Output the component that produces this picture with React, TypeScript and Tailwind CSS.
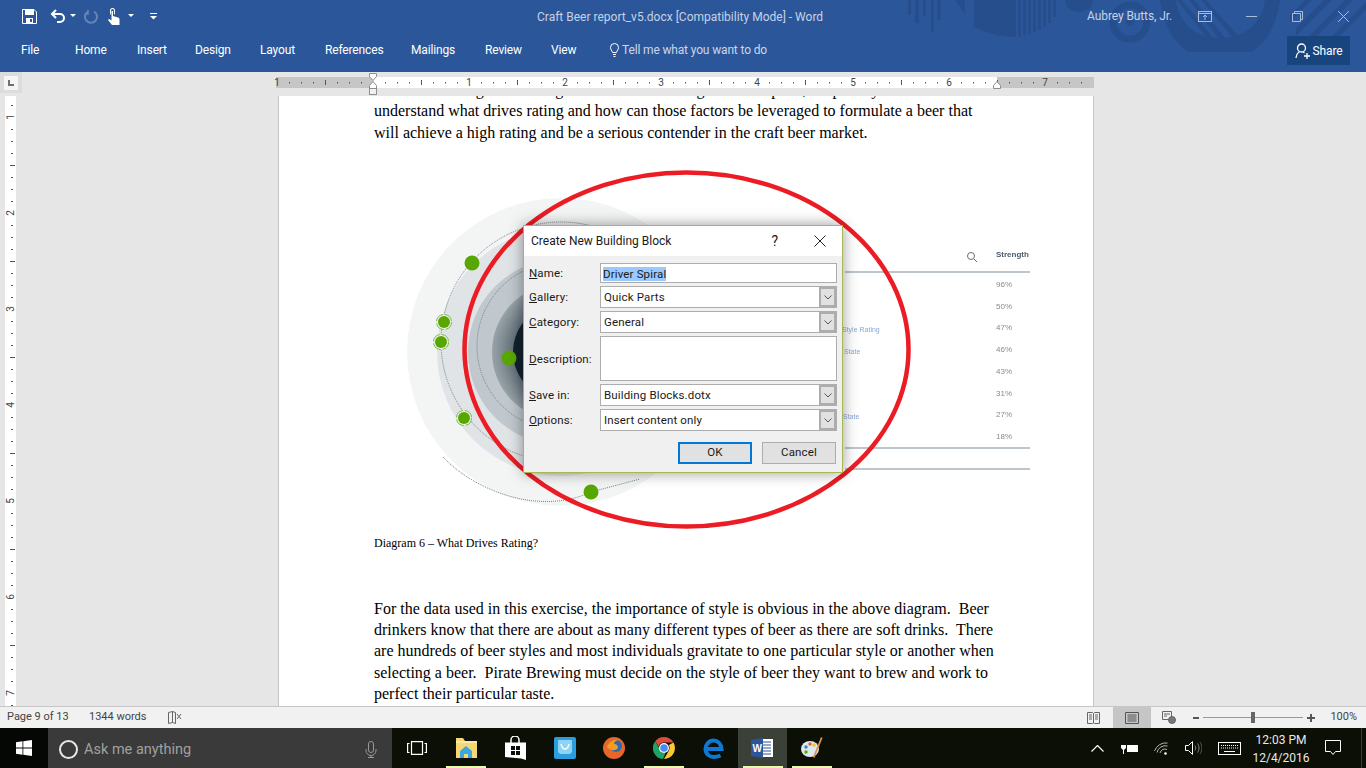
import type { ReactNode } from "react";

const UI = "font-['Roboto','Liberation_Sans',sans-serif]";

const tabs = [
  { label: "File", w: "w-[54px]" },
  { label: "Home", w: "w-[62px]" },
  { label: "Insert", w: "w-[58px]" },
  { label: "Design", w: "w-[65px]" },
  { label: "Layout", w: "w-[65px]" },
  { label: "References", w: "w-[86px]" },
  { label: "Mailings", w: "w-[74px]" },
  { label: "Review", w: "w-[66px]" },
  { label: "View", w: "w-[59px]" },
];

function TitleArt() {
  // the faint pattern of the Office theme, behind the title bar
  return (
    <svg className="absolute left-0 top-0 h-[72px] w-[1366px]" viewBox="0 0 1366 72" fill="#264e8c">
      <rect x="908" y="0" width="3" height="15" />
      <rect x="915" y="0" width="4" height="23" />
      <rect x="923" y="0" width="3" height="16" />
      <rect x="931" y="0" width="3" height="32" />
      <rect x="937" y="0" width="4" height="20" />
      <path d="M955 0h10v14z" />
      <path d="M974 0h42v37q-22 0-42-10z" />
      <path d="M1018 0h3v37h-3zM1023 0h3v35h-3zM1028 0h3v34h-3zM1033 0h3v32h-3zM1038 0h3v30h-3zM1043 0h3v27h-3zM1048 0h3v23h-3zM1053 0h3v17h-3z" />
      <path d="M1065 0h28a14 12 0 0 1-28 0z" />
      <circle cx="1130" cy="22" r="17" fill="none" stroke="#264e8c" strokeWidth="7" />
      <circle cx="1130" cy="22" r="4" />
      <path d="M1160 0h16c3 22 18 38 44 38s42-16 45-38h15c-3 24-13 42-28 52h-64c-15-10-25-28-28-52z" />
      <path d="M1177 0h5l38 46-6 1zM1189 0h5l37 45-6 2zM1201 0h5l36 40-5 3z" />
      <path d="M1290 15l15-15h7l-22 22zM1296 28l28-28h8l-36 36zM1310 35l35-35h8l-43 43zM1322 46l46-46v8l-46 46z" opacity="0.9" />
    </svg>
  );
}

function QuickAccess() {
  return (
    <div className="flex items-center">
      <svg className="ml-[22px]" width="15" height="15" viewBox="0 0 15 15">
        <path d="M.5.5h11.5l2.5 2.5v11.500H.5z" fill="none" stroke="#fff" />
        <rect x="3" y="1" width="9" height="5" fill="#fff" />
        <rect x="4" y="9" width="7" height="5" fill="#fff" />
        <rect x="8" y="10" width="2" height="3" fill="#2b579a" />
      </svg>
      <svg className="ml-[13px]" width="16" height="14" viewBox="0 0 16 14" fill="none" stroke="#fff" strokeWidth="2">
        <path d="M6 1L2 5l4 4" />
        <path d="M2 5h8a4 4 0 0 1 0 8H7" />
      </svg>
      <svg className="ml-[4px]" width="6" height="4" viewBox="0 0 6 4" fill="#fff"><path d="M0 0h6L3 3z" /></svg>
      <svg className="ml-[8px]" width="14" height="15" viewBox="0 0 14 15" fill="none" stroke="#6485b8" strokeWidth="2">
        <path d="M4 2.500a6 6 0 1 0 6 0" />
        <path d="M4 1v4H1" strokeWidth="1.500" />
      </svg>
      <svg className="ml-[9px]" width="13" height="17" viewBox="0 0 13 17" fill="#fff">
        <path d="M3 2.500a2.500 2.500 0 0 1 5 0V5a2.500 2.500 0 0 1-1 1.900V2.500a1.500 1.500 0 0 0-3 0v4.400A2.500 2.500 0 0 1 3 5z" />
        <path d="M4.500 3h1.500v5l5 1.500c1 .3 1.500 1 1.500 2V17H5l-4-5 1-1 2.500 1.500z" />
      </svg>
      <svg className="ml-[8px]" width="6" height="4" viewBox="0 0 6 4" fill="#fff"><path d="M0 0h6L3 3z" /></svg>
      <svg className="ml-[16px]" width="7" height="7" viewBox="0 0 7 7" fill="#fff">
        <rect y="0" width="7" height="1" />
        <path d="M0 3h7L3.500 6.500z" />
      </svg>
    </div>
  );
}

function WindowButtons() {
  return (
    <div className="flex items-center text-[#a9bcd9]">
      <div className="flex w-[46px] justify-center">
        <svg width="14" height="11" viewBox="0 0 14 11" fill="none" stroke="currentColor">
          <rect x=".5" y=".5" width="13" height="10" />
          <path d="M.5 2.500h13M7 9V4.500M5 6l2-2 2 2" />
        </svg>
      </div>
      <div className="flex w-[46px] justify-center"><div className="h-px w-[11px] bg-[#a9bcd9]" /></div>
      <div className="flex w-[46px] justify-center">
        <svg width="11" height="11" viewBox="0 0 11 11" fill="none" stroke="currentColor">
          <path d="M.5 2.500h8v8h-8zM2.500 2.500v-2h8v8h-2" />
        </svg>
      </div>
      <div className="flex w-[46px] justify-center">
        <svg width="11" height="11" viewBox="0 0 11 11" stroke="currentColor"><path d="M0 0l11 11M11 0L0 11" /></svg>
      </div>
    </div>
  );
}

function Ribbon() {
  return (
    <header className={`relative h-[72px] shrink-0 bg-[#2b579a] ${UI}`}>
      <TitleArt />
      <div className="relative flex h-9 items-center pb-[4px]">
        <QuickAccess />
        <div className="absolute left-[537px] top-[8px] whitespace-nowrap text-[12px] text-[#c5d2e6]">
          Craft Beer report_v5.docx [Compatibility Mode] - Word
        </div>
        <div className="ml-auto flex items-center">
          <span className="mr-[10px] whitespace-nowrap text-[12px] tracking-[-0.1px] text-[#c5d2e6]">Aubrey Butts, Jr.</span>
          <WindowButtons />
        </div>
      </div>
      <div className="relative flex h-9 items-center pl-[21px] text-[12px] tracking-[-0.15px] text-white">
        {tabs.map((t) => (
          <div key={t.label} className={`mt-[-8px] ${t.w}`}>{t.label}</div>
        ))}
        <div className="mt-[-8px] flex items-center gap-[3px] text-[#c9d6ea]">
          <svg width="9" height="14" viewBox="0 0 9 14" fill="none" stroke="#fff">
            <path d="M2.500 9.500C2 7.500.5 6.500.5 4.500a4 4 0 0 1 8 0c0 2-1.500 3-2 5zM3 11.500h3M3.500 13.500h2" />
          </svg>
          <span>Tell me what you want to do</span>
        </div>
        <div className="mb-[7px] ml-auto mr-[16px] flex h-[29px] w-[63px] items-center justify-center gap-[3px] bg-[#19457f] text-[12px]">
          <svg width="15" height="16" viewBox="0 0 15 16" fill="none" stroke="#fff" strokeWidth="1.300">
            <circle cx="6.500" cy="5" r="4" />
            <path d="M1 15c.5-4 2.500-6 4-6.500M8 9l1.500 1M9 13h6M12 10v6" />
          </svg>
          <span>Share</span>
        </div>
      </div>
    </header>
  );
}

function HRuler() {
  const dots: number[] = [];
  for (let x = 277; x < 1093; x += 12) dots.push(x);
  return (
    <svg className="ml-[250px]" width="822" height="24" viewBox="272 72 822 24">
      <rect x="276" y="77" width="818" height="11" fill="#c6c6c6" />
      <rect x="373" y="77" width="624" height="11" fill="#fff" />
      {dots.map((x) => {
        const off = x - 277;
        if (off % 96 === 0) return null;
        return off % 48 === 0 ? (
          <rect key={x} x={x} y="80" width="1" height="5" fill="#555" />
        ) : (
          <rect key={x} x={x} y="82" width="1" height="1.500" fill="#555" />
        );
      })}
      {[
        [277, "1"], [469, "1"], [565, "2"], [661, "3"], [757, "4"], [853, "5"], [949, "6"], [1045, "7"],
      ].map(([x, s]) => (
        <text key={x as number} x={x as number} y="86" textAnchor="middle" fontSize="10" fill="#444" fontFamily="Roboto">{s}</text>
      ))}
      <path d="M369.500 73.500h7v3l-3.500 4-3.500-4zM369.500 88.500v-3l3.500-4 3.500 4v3z" fill="#fff" stroke="#8e8e8e" />
      <rect x="369.500" y="88.500" width="7" height="6" fill="#f1f1f1" stroke="#8e8e8e" />
      <path d="M993.500 88.500v-3l3.500-4 3.500 4v3z" fill="#fff" stroke="#8e8e8e" />
    </svg>
  );
}

function VRuler() {
  const ticks: number[] = [];
  for (let y = 105; y < 706; y += 12) ticks.push(y);
  return (
    <svg className="ml-[5px] shrink-0 bg-white" width="11" height="610" viewBox="0 96 11 610">
      {ticks.map((y) => {
        if ((y - 117) % 96 === 0) return null;
        return (y - 117) % 48 === 0 ? (
          <rect key={y} x="5" y={y} width="5" height="1" fill="#555" />
        ) : (
          <rect key={y} x="6" y={y} width="2" height="1" fill="#555" />
        );
      })}
      {[1, 2, 3, 4, 5, 6, 7].map((n) => (
        <text key={n} transform={`translate(9 ${21 + 96 * n}) rotate(-90)`} textAnchor="middle" fontSize="10" fill="#444" fontFamily="Roboto">{n}</text>
      ))}
    </svg>
  );
}

function Dot({ x, y, ring }: { x: number; y: number; ring?: boolean }) {
  return (
    <g>
      {ring && <circle cx={x} cy={y} r="7.500" fill="#eef1f1" stroke="#7fb83c" strokeWidth="1" strokeDasharray="10 2" />}
      <circle cx={x} cy={y} r={ring ? 6 : 7.500} fill="#58a600" />
    </g>
  );
}

function Diagram() {
  const pct = [
    [284, "96%"], [306, "50%"], [327, "47%"], [349, "46%"], [371, "43%"], [393, "31%"], [414, "27%"], [436, "18%"],
  ];
  return (
    <svg className="block" width="719" height="391" viewBox="374 142 719 391">
      <defs>
        <radialGradient id="mid" gradientUnits="userSpaceOnUse" cx="561" cy="351" r="69">
          <stop offset="0.7" stopColor="#66727a" />
          <stop offset="1" stopColor="#98a3a9" />
        </radialGradient>
      </defs>
      <circle cx="561" cy="351" r="154" fill="#f3f5f5" />
      <circle cx="561" cy="351" r="124" fill="#e1e4e7" />
      <circle cx="561" cy="351" r="93" fill="#c0c8cd" />
      <circle cx="561" cy="351" r="69" fill="url(#mid)" />
      <circle cx="561" cy="351" r="48" fill="#12222e" />
      <g fill="none" stroke="#74828d" strokeWidth="1" strokeDasharray="1 1">
        <circle cx="561" cy="341" r="120" />
        <circle cx="561" cy="345" r="84" />
        <circle cx="561" cy="352" r="54" />
        <path d="M443 456C475 490 540 515 591 491L640 478" />
      </g>
      <Dot x={472} y={262} />
      <Dot x={444} y={321} ring />
      <Dot x={441} y={341} ring />
      <Dot x={509} y={357} />
      <Dot x={464} y={417} ring />
      <Dot x={591} y={491} />
      <g className="blur-[0.3px]" fontFamily="Liberation Sans">
        <path d="M845 271h185M845 447h185M845 468h185" stroke="#a9b4bb" strokeWidth="1.500" />
        <circle cx="971" cy="255" r="3.500" fill="none" stroke="#5c6f7d" />
        <path d="M974 258l3 3" stroke="#5c6f7d" />
        <text x="996" y="256" fontSize="8" fontWeight="700" fill="#4c5c6a">Strength</text>
        {pct.map(([y, s]) => (
          <text key={s} x="996" y={(y as number) + 2} fontSize="8" fill="#8a8a8a">{s}</text>
        ))}
        <text x="842" y="331" fontSize="7" fill="#8aa8d8">Style Rating</text>
        <text x="844" y="353" fontSize="7" fill="#8aa8d8">State</text>
        <text x="843" y="418" fontSize="7" fill="#8aa8d8">State</text>
      </g>
    </svg>
  );
}

function Page() {
  return (
    <div className="ml-[262px] h-[610px] w-[816px] shrink-0 overflow-hidden border-l border-r border-[#c6c6c6] bg-white font-['Liberation_Serif',serif] text-[16px] leading-[21.3px] text-black">
      <div className="mt-[-17px] pl-[95px]">
        <p className="whitespace-pre">The task of design for these great beers is a thorough and complete, deep analysis to</p>
        <p className="whitespace-pre">understand what drives rating and how can those factors be leveraged to formulate a beer that</p>
        <p className="whitespace-pre">will achieve a high rating and be a serious contender in the craft beer market.</p>
      </div>
      <div className="pl-[95px]"><Diagram /></div>
      <p className="pl-[95px] text-[12px] leading-[18px]">Diagram 6 – What Drives Rating?</p>
      <div className="mt-[46px] pl-[95px]">
        <p className="whitespace-pre">For the data used in this exercise, the importance of style is obvious in the above diagram.  Beer</p>
        <p className="whitespace-pre">drinkers know that there are about as many different types of beer as there are soft drinks.  There</p>
        <p className="whitespace-pre">are hundreds of beer styles and most individuals gravitate to one particular style or another when</p>
        <p className="whitespace-pre">selecting a beer.  Pirate Brewing must decide on the style of beer they want to brew and work to</p>
        <p className="whitespace-pre">perfect their particular taste.</p>
      </div>
    </div>
  );
}

function Select({ value }: { value: string }) {
  return (
    <div className="flex h-[22px] items-center border border-[#adadad] bg-white pl-[3px]">
      <span className="flex-1 pt-[2px]">{value}</span>
      <div className="flex h-full w-[17px] items-center justify-center border-2 border-[#adadad] bg-[#e1e1e1]">
        <svg width="8" height="5" viewBox="0 0 8 5" fill="none" stroke="#555"><path d="M.5.500L4 4 7.500.500" /></svg>
      </div>
    </div>
  );
}

function Dialog() {
  return (
    <div className={`absolute left-[523px] top-[225px] w-[320px] border border-[#a6b84e] bg-[#f0f0f0] text-[11.5px] tracking-[0.15px] text-[#1a1a1a] shadow-[0_0_14px_rgba(0,0,0,0.4)] ${UI}`}>
      <div className="flex h-[30px] items-center bg-white pl-[7px] text-[12px] tracking-normal">
        <span className="flex-1">Create New Building Block</span>
        <span className="mr-[36px] text-[14px]">?</span>
        <svg className="mr-[16px]" width="12" height="12" viewBox="0 0 12 12" stroke="#222"><path d="M.5.500l11 11M11.500.500l-11 11" /></svg>
      </div>
      <div className="grid grid-cols-[71px_237px] items-center gap-y-[3px] pl-[5px] pt-[7px]">
        <label className="pt-[2px]"><u>N</u>ame:</label>
        <div className="flex h-[20px] items-center border border-[#adadad] bg-white pl-[2px] pt-[1px]">
          <span className="bg-[#99c9ff] leading-[14px]">Driver Spiral</span>
        </div>
        <label className="pt-[2px]"><u>G</u>allery:</label>
        <Select value="Quick Parts" />
        <label className="pt-[2px]"><u>C</u>ategory:</label>
        <Select value="General" />
        <label className="pt-[2px]"><u>D</u>escription:</label>
        <div className="h-[45px] border border-[#adadad] bg-white" />
        <label className="pt-[2px]"><u>S</u>ave in:</label>
        <Select value="Building Blocks.dotx" />
        <label className="pt-[2px]"><u>O</u>ptions:</label>
        <Select value="Insert content only" />
      </div>
      <div className="flex justify-end gap-[10px] pb-[8px] pr-[6px] pt-[11px]">
        <button className="h-[22px] w-[74px] border-2 border-[#0078d7] bg-[#e1e1e1]">OK</button>
        <button className="h-[22px] w-[74px] border border-[#adadad] bg-[#e1e1e1]">Cancel</button>
      </div>
    </div>
  );
}

function StatusBar() {
  return (
    <footer className={`flex h-[22px] shrink-0 items-center border-t border-[#c6c6c6] bg-[#f1f1f1] text-[11px] text-[#444] ${UI}`}>
      <span className="ml-[7px] w-[82px]">Page 9 of 13</span>
      <span className="w-[79px]">1344 words</span>
      <svg width="14" height="13" viewBox="0 0 14 13" fill="none" stroke="#666">
        <path d="M.5 1.500l4-1 3 1v11l-3-1-4 1zM4.500.500v11" />
        <path d="M9 3l4 5M13 3L9 8" />
      </svg>
      <div className="ml-auto flex h-full items-center">
        <svg width="13" height="12" viewBox="0 0 13 12" fill="none" stroke="#666">
          <path d="M.5.500h5l1 1 1-1h5v11h-5l-1-.5-1 .5h-5zM6.500 1.500V11M2 3h3M2 5h3M2 7h3M8 3h3M8 5h3M8 7h3" />
        </svg>
        <div className="ml-[13px] flex h-full w-[38px] items-center justify-center bg-[#c6c6c6]">
          <svg width="14" height="12" viewBox="0 0 14 12" fill="none" stroke="#555">
            <path d="M.5.500h13v11H.5zM2.500 3h9M2.500 5h9M2.500 7h9M2.500 9h9" />
          </svg>
        </div>
        <svg className="ml-[11px]" width="14" height="13" viewBox="0 0 14 13" fill="none" stroke="#666">
          <path d="M.5.500h9v8h-9zM2 3h6M2 5h3" />
          <circle cx="10" cy="9" r="3.500" fill="#777" />
        </svg>
        <div className="ml-[17px] h-[2px] w-[6px] bg-[#555]" />
        <div className="relative ml-[4px] h-px w-[100px] bg-[#999]">
          <div className="absolute left-[48px] top-[-5px] h-[11px] w-[4px] bg-[#666]" />
        </div>
        <svg className="ml-[4px]" width="8" height="8" viewBox="0 0 8 8" fill="#555"><path d="M3 0h2v3h3v2H5v3H3V5H0V3h3z" /></svg>
        <span className="ml-[15px] mr-[9px]">100%</span>
      </div>
    </footer>
  );
}

function TaskItem({ active, running, children }: { active?: boolean; running?: boolean; children: ReactNode }) {
  return (
    <div className={`relative flex h-full w-[49.4px] items-center justify-center ${active ? "bg-[#3b4138]" : ""}`}>
      {children}
      {running && <div className="absolute bottom-0 left-[5px] h-[2px] w-[40px] bg-[#edf7ae]" />}
    </div>
  );
}

function Taskbar() {
  return (
    <div className={`flex h-10 shrink-0 items-center bg-[#0b0f05] text-white ${UI}`}>
      <div className="flex h-full w-12 items-center justify-center bg-[#050705]">
        <svg width="16" height="16" viewBox="0 0 16 16" fill="#fff">
          <path d="M0 2.200l6.500-.9v6.300H0zM7.300 1.200L16 0v7.600H7.300zM0 8.400h6.500v6.300L0 13.800zM7.300 8.400H16V16l-8.700-1.200z" />
        </svg>
      </div>
      <div className="flex h-full w-[344px] items-center bg-[#3a3a3a] pt-[2px]">
        <div className="ml-[11px] h-[19px] w-[19px] rounded-full border-[2.5px] border-[#e6e6e6]" />
        <span className="ml-[6px] flex-1 pt-[2px] text-[14.5px] text-[#a0a0a0]">Ask me anything</span>
        <svg className="mr-[15px]" width="12" height="17" viewBox="0 0 12 17" fill="none" stroke="#999">
          <rect x="3.500" y=".5" width="5" height="11" rx="2.500" />
          <path d="M1 8v1.500a5 5 0 0 0 10 0V8M6 14.500v2M3 16.500h6" />
        </svg>
      </div>
      <TaskItem>
        <svg width="20" height="14" viewBox="0 0 20 14" fill="none" stroke="#fff" strokeWidth="1.200">
          <path d="M4.500.6h11v12.800h-11zM2.500 2.500H.6v9h1.900M17.500 2.500h1.900v9h-1.900" />
        </svg>
      </TaskItem>
      <TaskItem running>
        <svg width="22" height="20" viewBox="0 0 22 20">
          <path d="M1 0h7l2 3h12v17H1z" fill="#f7d774" />
          <path d="M1 3h21v2H1z" fill="#fbe9a8" />
          <path d="M5 13l6-5 6 5v7h-4v-4H9v4H5z" fill="#3aa7e0" />
        </svg>
      </TaskItem>
      <TaskItem>
        <svg width="21" height="24" viewBox="0 0 21 24">
          <path d="M6 7V4a4 4 0 0 1 8 0v3" fill="none" stroke="#fff" strokeWidth="1.500" />
          <path d="M0 6.500h21V24l-5-1.500L0 21z" fill="#fff" />
          <path d="M6 10h4v4H6zM11 10h4v4h-4zM6 15h4v4H6zM11 15h4v4h-4z" fill="#0b0f05" />
        </svg>
      </TaskItem>
      <TaskItem>
        <svg width="22" height="22" viewBox="0 0 22 22">
          <rect width="22" height="22" rx="2" fill="#2a9fe0" />
          <path d="M4 3h14v12l-2 2H6l-2-2z" fill="#8fd3f4" />
          <path d="M7 7c1 4 3 5 4 5s3-1 4-5" fill="none" stroke="#fff" strokeWidth="1.300" />
        </svg>
      </TaskItem>
      <TaskItem>
        <svg width="22" height="22" viewBox="0 0 22 22">
          <circle cx="11" cy="11" r="11" fill="#e8662a" />
          <circle cx="13" cy="9" r="6" fill="#2b6cb0" />
          <path d="M4 10c2-6 8-8 12-7-3 0-5 2-5 4 3 0 4 2 4 4-3 4-9 2-11-1z" fill="#f59b23" />
        </svg>
      </TaskItem>
      <TaskItem running>
        <svg width="22" height="22" viewBox="0 0 22 22">
          <path d="M11 0a11 11 0 0 1 9.500 5.500H11a5.500 5.500 0 0 0-5.300 4L2.200 4.300A11 11 0 0 1 11 0z" fill="#dd4b3e" />
          <path d="M20.500 5.500A11 11 0 0 1 11 22l4.800-8.300A5.500 5.500 0 0 0 15.800 8z" fill="#fcc934" />
          <path d="M2.200 4.300L7 12.500A5.500 5.500 0 0 0 12.500 16L10 22A11 11 0 0 1 2.200 4.300z" fill="#1da462" />
          <circle cx="11" cy="11" r="5" fill="#fff" />
          <circle cx="11" cy="11" r="3.800" fill="#4a8af4" />
        </svg>
      </TaskItem>
      <TaskItem>
        <svg width="21" height="21" viewBox="0 0 21 21" fill="none" stroke="#0f78d4" strokeWidth="4">
          <path d="M3 11h15.500C18 5.500 14.500 2.500 10.500 2.500 6 2.500 2.500 6.500 2.500 11c0 5 4 8 8 8 2.500 0 5-.5 7-1.500" />
        </svg>
      </TaskItem>
      <TaskItem active running>
        <svg width="22" height="20" viewBox="0 0 22 20">
          <path d="M8 1h14v18H8z" fill="#fff" />
          <path d="M12 4h8M12 7h8M12 10h8M12 13h8M12 16h8" stroke="#2b579a" />
          <path d="M0 2l12-2v20L0 18z" fill="#2b579a" />
          <text x="1.500" y="14" fontSize="10" fontWeight="700" fill="#fff" fontFamily="Liberation Sans">W</text>
        </svg>
      </TaskItem>
      <TaskItem running>
        <svg width="22" height="24" viewBox="0 0 22 24">
          <ellipse cx="9" cy="13" rx="9" ry="8" fill="#dfe9ee" />
          <circle cx="5" cy="11" r="1.700" fill="#3b82c4" />
          <circle cx="9" cy="8" r="1.700" fill="#e45c3a" />
          <circle cx="13" cy="9" r="1.700" fill="#f0c330" />
          <circle cx="5" cy="16" r="1.700" fill="#58a600" />
          <path d="M20 1l1.500 1-8 20-1.500-1z" fill="#d9924a" />
        </svg>
      </TaskItem>
      <div className="ml-auto flex h-full items-center">
        <div className="flex w-[34px] justify-center">
          <svg width="13" height="7" viewBox="0 0 13 7" fill="none" stroke="#fff" strokeWidth="1.200"><path d="M.5 6.500l6-6 6 6" /></svg>
        </div>
        <div className="flex w-[30px] justify-center">
          <svg width="17" height="12" viewBox="0 0 17 12" fill="#fff">
            <path d="M1 0v3M4 0v3M0 3h5v3L3 8v4H2V8L0 6z" />
            <rect x="6" y="3" width="11" height="7" />
          </svg>
        </div>
        <div className="flex w-[34px] justify-center">
          <svg width="14" height="13" viewBox="0 0 14 13" fill="none" stroke="#b5b5b5">
            <path d="M.5 9a12 12 0 0 1 13-8M3 10.500a8.500 8.500 0 0 1 10.500-6.500M6 11a5 5 0 0 1 7-3.500" />
            <circle cx="11.500" cy="11.500" r="1.300" fill="#fff" stroke="none" />
          </svg>
        </div>
        <div className="flex w-[30px] justify-center">
          <svg width="17" height="14" viewBox="0 0 17 14" fill="none" stroke="#fff">
            <path d="M.5 4.500h3l4-4v13l-4-4h-3z" />
            <path d="M10 4.500c1 1.500 1 3.500 0 5M12.500 2.500c2 3 2 6 0 9" stroke="#888" />
            <path d="M15 1c2.500 4 2.500 8 0 12" stroke="#555" />
          </svg>
        </div>
        <div className="flex w-[42px] justify-center">
          <svg width="23" height="13" viewBox="0 0 23 13" fill="none" stroke="#fff">
            <rect x=".5" y=".5" width="22" height="12" />
            <path d="M3 3.500h17M3 6h17" strokeDasharray="1 1" />
            <path d="M6 9.500h11" />
          </svg>
        </div>
        <div className="flex w-[62px] flex-col items-center pt-[2px] text-[12px] leading-[18px] text-[#e8e8e8]">
          <span>12:03 PM</span>
          <span>12/4/2016</span>
        </div>
        <div className="flex w-[42px] justify-center">
          <svg width="16" height="16" viewBox="0 0 16 16" fill="none" stroke="#fff"><path d="M.5.500h15v11h-5l-2.500 3-2.500-3h-5z" /></svg>
        </div>
        <div className="h-full w-[12px]"><div className="ml-[7px] h-full w-px bg-[#3a3d38]" /></div>
      </div>
    </div>
  );
}

export default function App() {
  return (
    <div className="relative flex h-[768px] w-[1366px] flex-col overflow-hidden bg-[#e6e6e6]">
      <Ribbon />
      {/* ruler strip */}
      <div className="flex h-6 shrink-0">
        <div className="flex h-[21px] w-[22px] items-center justify-center bg-[#dcdcdc]">
          <div className="flex h-[14px] w-[14px] items-center justify-center bg-[#f5f5f5]">
            <div className="h-[6px] w-[6px] border-b-2 border-l-2 border-[#707070]" />
          </div>
        </div>
        <HRuler />
      </div>
      {/* document */}
      <div className="flex h-[610px] shrink-0">
        <VRuler />
        <Page />
      </div>
      <StatusBar />
      <Taskbar />
      {/* hand drawn annotation */}
      <svg className="absolute left-0 top-0" width="1366" height="768" viewBox="0 0 1366 768" fill="none">
        <ellipse cx="686.500" cy="349.500" rx="222" ry="177" stroke="#ec1c24" strokeWidth="4.500" />
      </svg>
      <Dialog />
    </div>
  );
}
